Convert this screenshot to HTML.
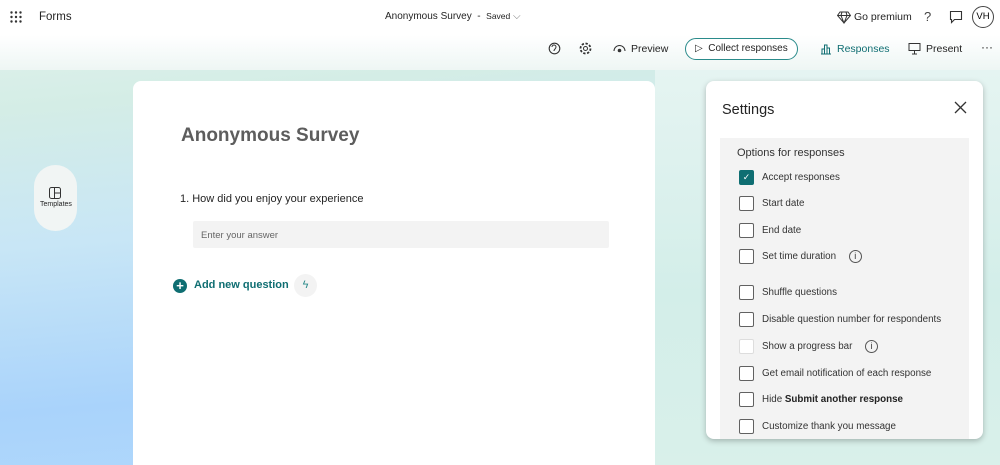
<!DOCTYPE html>
<html style="overflow:hidden;width:1000px;height:465px"><head><style>
*{margin:0;padding:0;box-sizing:border-box}
body{width:1000px;height:465px;overflow:hidden;font-family:"Liberation Sans",sans-serif;position:relative;
background:linear-gradient(175deg,#e4f3ee 0%,#d4ede6 20%,#c8e6f6 45%,#a9d3fb 75%,#b4dafc 100%);}
.rbg{position:absolute;left:655px;top:35px;right:0;bottom:0;background:linear-gradient(180deg,#e8f5f3,#d3eee9 60%,#d9f0ea)}
.top{position:absolute;left:0;top:0;width:1000px;height:35px;background:#fff}
.bar2{position:absolute;left:0;top:35px;width:1000px;height:35px;background:linear-gradient(180deg,#fff,#eef6f4)}
.t{position:absolute;white-space:nowrap;color:#242424}
.card{position:absolute;left:133px;top:81px;width:522px;height:384px;background:#fff;border-radius:8px 8px 0 0}
.set{position:absolute;left:706px;top:81px;width:277px;height:358px;background:#fff;border-radius:8px;box-shadow:0 2px 6px rgba(0,0,0,.25);overflow:hidden}
.inner{position:absolute;left:14px;top:57px;width:249px;height:301px;background:#f3f3f3}
.cb{position:absolute;left:33px;width:15px;height:15px;border:1.3px solid #616161;border-radius:2px;background:#fff}
.lb{position:absolute;left:56px;font-size:9.8px;color:#333;white-space:nowrap}
.info{display:inline-block;width:13px;height:13px;border:1px solid #555;border-radius:50%;font-size:9px;text-align:center;line-height:11px;vertical-align:middle;margin-left:10px}
</style></head><body>
<div class="rbg"></div>
<div class="top"></div><div class="bar2"></div>
<svg style="position:absolute;left:10px;top:11px" width="12" height="12"><g fill="#333"><circle cx="1.5" cy="1.5" r="1.2"/><circle cx="6" cy="1.5" r="1.2"/><circle cx="10.5" cy="1.5" r="1.2"/><circle cx="1.5" cy="6" r="1.2"/><circle cx="6" cy="6" r="1.2"/><circle cx="10.5" cy="6" r="1.2"/><circle cx="1.5" cy="10.5" r="1.2"/><circle cx="6" cy="10.5" r="1.2"/><circle cx="10.5" cy="10.5" r="1.2"/></g></svg>
<div class="t" style="left:39px;top:11px;font-size:11.5px">Forms</div>
<div class="t" style="left:385px;top:11px;font-size:10px">Anonymous Survey &nbsp;- &nbsp;<span style="font-size:8.5px">Saved</span> <span style="color:#777">⌵</span></div>
<svg style="position:absolute;left:837px;top:10px" width="14" height="14"><path d="M3 2h8l2.5 3.5L7 13 .5 5.5z M.5 5.5h13 M5 2l-1 3.5L7 13l3-7.5L9 2" fill="none" stroke="#333" stroke-width="1"/></svg>
<div class="t" style="left:854px;top:11px;font-size:10.5px">Go premium</div>
<div class="t" style="left:924px;top:9px;font-size:13px;color:#444">?</div>
<svg style="position:absolute;left:949px;top:10px" width="14" height="14"><path d="M1.5 1.5h11v8h-7l-3 3v-3h-1z" fill="none" stroke="#333" stroke-width="1.1"/></svg>
<div style="position:absolute;left:972px;top:6px;width:22px;height:22px;border:1px solid #444;border-radius:50%;font-size:9.5px;text-align:center;line-height:20px">VH</div>
<svg style="position:absolute;left:548px;top:42px" width="13" height="13"><circle cx="6.5" cy="6.5" r="5.3" fill="none" stroke="#333" stroke-width="1.1"/><path d="M4 5a2 2 0 0 1 4 0c0 2-2 2-2 4" fill="none" stroke="#333"/></svg>
<svg style="position:absolute;left:579px;top:42px" width="13" height="13"><circle cx="6.5" cy="6.5" r="2" fill="none" stroke="#333"/><circle cx="6.5" cy="6.5" r="5" fill="none" stroke="#333" stroke-dasharray="2.3 1.6" stroke-width="1.8"/></svg>
<svg style="position:absolute;left:613px;top:44px" width="13" height="10"><path d="M1 7a5.5 5.5 0 0 1 11 0" fill="none" stroke="#333"/><circle cx="6.5" cy="6.5" r="1.8" fill="#333"/></svg>
<div class="t" style="left:631px;top:43px;font-size:10.5px">Preview</div>
<div style="position:absolute;left:685px;top:38px;width:113px;height:22px;border:1.3px solid #2a8b8b;border-radius:12px;background:#fff"></div>
<div class="t" style="left:695px;top:43px;font-size:10px">▷&nbsp;&nbsp;Collect responses</div>
<svg style="position:absolute;left:820px;top:43px" width="12" height="12"><path d="M1 11h10M2 11V6h2.5v5M4.5 11V2h2.5v9M7 11V5h2.5v6" fill="none" stroke="#0f6e72"/></svg>
<div class="t" style="left:837px;top:43px;font-size:10.5px;color:#0f6e72">Responses</div>
<svg style="position:absolute;left:908px;top:42px" width="13" height="13"><rect x="1" y="1.5" width="11" height="7" fill="none" stroke="#333"/><path d="M6.5 8.5v3M4 12h5" stroke="#333"/></svg>
<div class="t" style="left:926px;top:43px;font-size:10.5px">Present</div>
<div class="t" style="left:981px;top:40px;font-size:12px">···</div>
<div style="position:absolute;left:34px;top:165px;width:43px;height:66px;border-radius:22px;background:#f1f5f4"></div>
<svg style="position:absolute;left:49px;top:187px" width="12" height="12"><rect x=".5" y=".5" width="11" height="11" rx="2" fill="none" stroke="#333"/><path d="M5.5 .5v11M5.5 6h6" stroke="#333"/></svg>
<div class="t" style="left:40px;top:201px;font-size:7px">Templates</div>
<div class="card"></div>
<div class="t" style="left:181px;top:125px;font-size:19px;font-weight:bold;color:#5d5d5d">Anonymous Survey</div>
<div class="t" style="left:180px;top:193px;font-size:11px">1. How did you enjoy your experience</div>
<div style="position:absolute;left:193px;top:221px;width:416px;height:27px;background:#f3f3f3;border-radius:2px"></div>
<div class="t" style="left:201px;top:230px;font-size:9.5px;color:#666">Enter your answer</div>
<div style="position:absolute;left:173px;top:279px;width:14px;height:14px;border-radius:50%;background:#0f6e72;color:#fff;font-size:13px;line-height:13px;text-align:center;font-weight:bold">+</div>
<div class="t" style="left:194px;top:279px;font-size:11px;font-weight:bold;color:#0f6e72">Add new question</div>
<div style="position:absolute;left:294px;top:274px;width:23px;height:23px;border-radius:50%;background:#f3f3f3;color:#2a8b8b;font-size:11px;text-align:center;line-height:23px">ϟ</div>
<div class="set">
<div class="t" style="left:16px;top:21px;font-size:14.5px">Settings</div>
<svg style="position:absolute;left:248px;top:20px" width="13" height="13"><path d="M1 1l11 11M12 1L1 12" stroke="#333" stroke-width="1.3"/></svg>
<div class="inner"></div>
<div class="t" style="left:31px;top:66px;font-size:11px;color:#333">Options for responses</div>
<div class="cb" style="top:89px;background:#0f6e72;border-color:#0f6e72;color:#fff;font-size:9px;text-align:center;line-height:12px">✓</div><div class="lb" style="top:91px">Accept responses</div>
<div class="cb" style="top:115px"></div><div class="lb" style="top:117px">Start date</div>
<div class="cb" style="top:142px"></div><div class="lb" style="top:144px">End date</div>
<div class="cb" style="top:168px"></div><div class="lb" style="top:169px">Set time duration <span class="info">i</span></div>
<div class="cb" style="top:204px"></div><div class="lb" style="top:206px">Shuffle questions</div>
<div class="cb" style="top:231px"></div><div class="lb" style="top:233px">Disable question number for respondents</div>
<div class="cb" style="top:258px;border-color:#ddd"></div><div class="lb" style="top:259px">Show a progress bar <span class="info">i</span></div>
<div class="cb" style="top:285px"></div><div class="lb" style="top:287px">Get email notification of each response</div>
<div class="cb" style="top:311px"></div><div class="lb" style="top:313px">Hide <b style="color:#222">Submit another response</b></div>
<div class="cb" style="top:338px"></div><div class="lb" style="top:340px">Customize thank you message</div>
</div>
</body></html>
